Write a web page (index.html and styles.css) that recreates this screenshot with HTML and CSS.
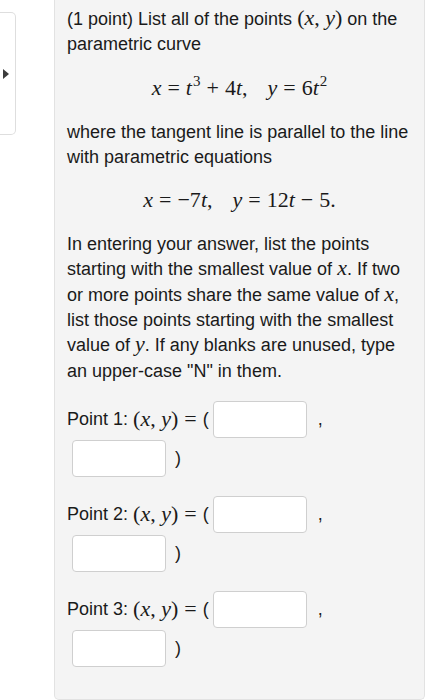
FILE: index.html
```html
<!DOCTYPE html>
<html>
<head>
<meta charset="utf-8">
<link rel="stylesheet" href="styles.css">
</head>
<body>
<div class="layout">
  <aside class="side">
    <div class="tab"><span class="arrow"></span></div>
  </aside>
  <main class="panel">
    <p class="txt">(1 point) List all of the points <span class="m">(<i>x</i>, <i>y</i>)</span> on the parametric curve</p>
    <p class="disp"><span class="m"><i>x</i><span class="op">=</span><i>t</i><sup>3</sup><span class="op">+</span>4<i>t</i>,<span class="gap"></span><i>y</i><span class="op">=</span>6<i>t</i><sup>2</sup></span></p>
    <p class="txt">where the tangent line is parallel to the line with parametric equations</p>
    <p class="disp"><span class="m"><i>x</i><span class="op">=</span>&minus;7<i>t</i>,<span class="gap"></span><i>y</i><span class="op">=</span>12<i>t</i><span class="op">&minus;</span>5.</span></p>
    <p class="txt">In entering your answer, list the points starting with the smallest value of <span class="m"><i>x</i></span>. If two or more points share the same value of <span class="m"><i>x</i></span>, list those points starting with the smallest value of <span class="m"><i>y</i></span>. If any blanks are unused, type an upper-case "N" in them.</p>

    <div class="answer">
      <div class="row">Point 1: <span class="m">(<i>x</i>, <i>y</i>)<span class="op">=</span></span>(<span class="box first"></span><span class="comma">,</span></div>
      <div class="row"><span class="box second"></span><span class="close">)</span></div>
    </div>
    <div class="answer">
      <div class="row">Point 2: <span class="m">(<i>x</i>, <i>y</i>)<span class="op">=</span></span>(<span class="box first"></span><span class="comma">,</span></div>
      <div class="row"><span class="box second"></span><span class="close">)</span></div>
    </div>
    <div class="answer">
      <div class="row">Point 3: <span class="m">(<i>x</i>, <i>y</i>)<span class="op">=</span></span>(<span class="box first"></span><span class="comma">,</span></div>
      <div class="row"><span class="box second"></span><span class="close">)</span></div>
    </div>
  </main>
</div>
</body>
</html>
```
FILE: styles.css
```css
html, body {
  margin: 0;
  padding: 0;
  background: #ffffff;
}
body {
  font-family: "Liberation Sans", Arial, sans-serif;
  font-size: 18px;
  color: #1a1a1a;
}
.layout {
  display: flex;
  align-items: flex-start;
}
.side {
  width: 54px;
  flex: none;
}
.tab {
  margin-top: 12px;
  width: 15px;
  height: 121px;
  background: #ffffff;
  border: 1px solid #dedede;
  border-left: none;
  border-radius: 0 5px 5px 0;
  display: flex;
  align-items: center;
}
.arrow {
  width: 0;
  height: 0;
  border-top: 5px solid transparent;
  border-bottom: 5px solid transparent;
  border-left: 6px solid #3c3c3c;
  margin-left: 3px;
}
.panel {
  width: 345px;
  background: #f4f4f4;
  border: 1px solid #e2e2e2;
  border-top: none;
  border-radius: 0 0 5px 5px;
  padding: 7px 12px 31px 12px;
}
.txt {
  margin: 0;
  line-height: 25.3px;
}
.disp {
  margin: 19px 0 18px;
  text-align: center;
  line-height: 25px;
}
.m {
  font-family: "Liberation Serif", "Times New Roman", serif;
  font-size: 22px;
  line-height: 1;
}
.m i {
  font-style: italic;
}
.m sup {
  font-size: 15px;
  line-height: 0;
  vertical-align: 9px;
  margin-left: 1px;
}
.op {
  margin: 0 6px;
}
.gap {
  display: inline-block;
  width: 20px;
}
.answer {
  margin-top: 16px;
}
.answer + .answer {
  margin-top: 17px;
}
.row {
  height: 39px;
  display: flex;
  align-items: center;
  white-space: pre;
}
.box {
  display: inline-block;
  width: 92px;
  height: 35px;
  background: #ffffff;
  border: 1px solid #cfcfcf;
  border-radius: 4px;
}
.first {
  margin-left: 4px;
}
.second {
  margin-left: 5px;
}
.comma {
  margin-left: 11px;
}
.close {
  margin-left: 9px;
}
```
